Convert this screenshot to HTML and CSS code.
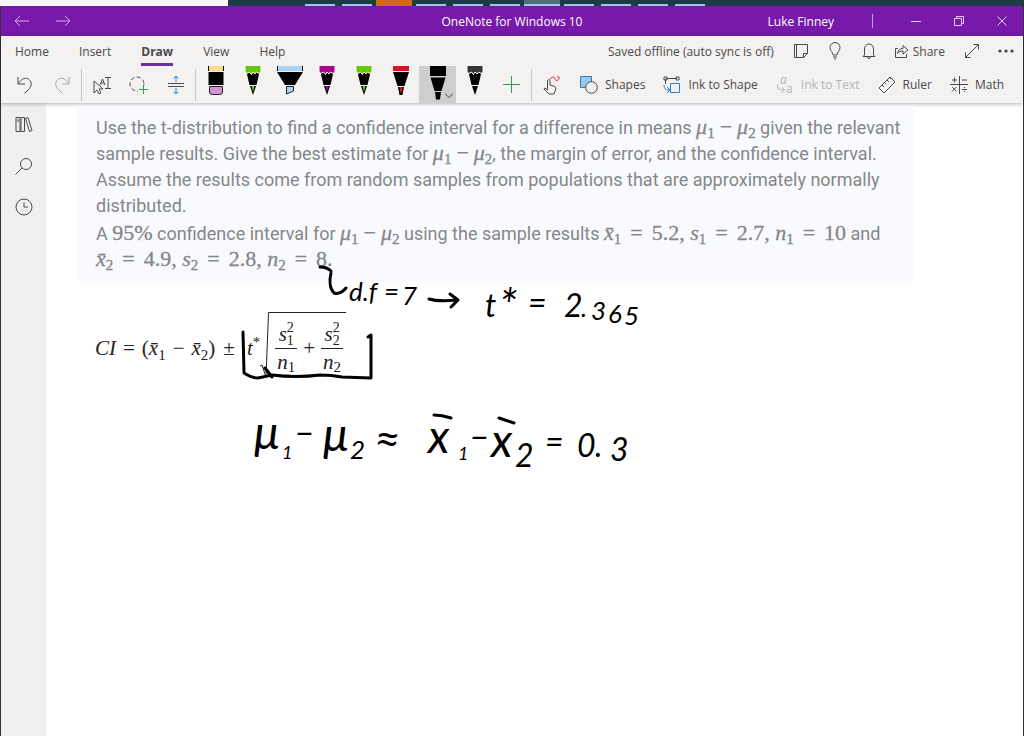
FILE: index.html
```html
<!DOCTYPE html>
<html lang="en">
<head>
  <meta charset="UTF-8">
  <meta name="viewport" content="width=device-width, initial-scale=1.0">
  <title>OneNote for Windows 10</title>
  <link rel="stylesheet" href="styles.css">
</head>
<body>

  <!-- Taskbar peeking out above the window -->
  <div class="taskbar">
    <div class="task-blank"></div>
    <div class="tasks">
      <span></span><span></span><span class="orange"></span><span></span><span></span><span></span><span class="current"></span><span></span><span></span><span></span><span></span>
    </div>
  </div>

  <div class="window">
    <!-- Title bar -->
    <header class="titlebar">
      <div class="history">
        <button aria-label="Back"><svg width="16" height="12" viewBox="0 0 16 12"><path d="M15 6H1M6 1L1 6l5 5"/></svg></button>
        <button aria-label="Forward"><svg width="16" height="12" viewBox="0 0 16 12"><path d="M1 6h14M10 1l5 5-5 5"/></svg></button>
      </div>
      <div class="title">OneNote for Windows 10</div>
      <div class="account">
        <span class="user">Luke Finney</span>
        <span class="divider"></span>
        <button aria-label="Minimize"><svg width="10" height="10" viewBox="0 0 10 10"><path d="M0 5.5h10"/></svg></button>
        <button aria-label="Restore"><svg width="10" height="10" viewBox="0 0 10 10"><path d="M.5 2.5h7v7h-7zM2.5 2.500V.5h7v7h-2"/></svg></button>
        <button aria-label="Close"><svg width="10" height="10" viewBox="0 0 10 10"><path d="M.5.5l9 9M9.500.5l-9 9"/></svg></button>
      </div>
    </header>

    <!-- Ribbon -->
    <div class="ribbon">
      <div class="menu">
        <nav class="tabs">
          <a href="#">Home</a>
          <a href="#">Insert</a>
          <a href="#" class="active">Draw</a>
          <a href="#">View</a>
          <a href="#">Help</a>
        </nav>
        <div class="status">
          <span class="saved">Saved offline (auto sync is off)</span>
          <button aria-label="Feed"><svg width="16" height="16" viewBox="0 0 16 16"><path d="M1.500 1.500h13v9l-4 4h-9zM3.500 1.500v13M14.500 10.500h-4v4"/></svg></button>
          <button aria-label="Tips"><svg width="16" height="18" viewBox="0 0 16 18"><path d="M6 13c0-3-3-4-3-7.500a5 5 0 0 1 10 0C13 9 10 10 10 13zM6 15h4M7 17h2"/></svg></button>
          <button aria-label="Notifications"><svg width="16" height="18" viewBox="0 0 16 18"><path d="M3.500 13V7a4.500 5 0 0 1 9 0v6l1.500 1.500H2zM6.500 15a1.500 1.500 0 0 0 3 0"/></svg></button>
          <button class="share"><svg width="15" height="16" viewBox="0 0 15 16"><path d="M4 5.500H1.500v9h11V11M3.500 10.500C4 7 6 5.500 9 5.500v-3l5 4.500-5 4v-3c-2.500 0-4 .5-5.500 2.500z"/></svg>Share</button>
          <button aria-label="Full screen"><svg width="16" height="16" viewBox="0 0 16 16"><path d="M1.500 14.500l13-13M9.500 1.500h5v5M1.500 9.500v5h5"/></svg></button>
          <button aria-label="More"><svg class="solid" width="16" height="4" viewBox="0 0 16 4"><circle cx="2" cy="2" r="1.600"/><circle cx="8" cy="2" r="1.600"/><circle cx="14" cy="2" r="1.600"/></svg></button>
        </div>
      </div>

      <div class="tools">
        <button aria-label="Undo"><svg width="18" height="20" viewBox="0 0 18 20"><path d="M2 2v7h7M2.500 8.500C6 3 10 2 13 4.500c4 3.500 2 7.500-.5 10L8.500 18.500"/></svg></button>
        <button aria-label="Redo" class="dim"><svg width="18" height="20" viewBox="0 0 18 20"><path d="M16 2v7H9M15.500 8.500C12 3 8 2 5 4.500c-4 3.500-2 7.500.5 10l4 4"/></svg></button>
        <span class="rule"></span>
        <button aria-label="Select objects or type text"><svg width="20" height="20" viewBox="0 0 20 20"><path d="M2 6v12l3-3 2 4 2-1-2-4h4zM8 10l2.500-6 2.500 6M9 8h3M13 2.500h6M16 2.500v11M13 13.500h6"/></svg></button>
        <button aria-label="Lasso select"><svg width="20" height="20" viewBox="0 0 20 20"><circle cx="8" cy="9" r="7" stroke-dasharray="4 2.500"/><path class="white" d="M9 10h11v10H9z"/><path class="green" d="M14.500 10v9M10 14.500h9"/></svg></button>
        <button aria-label="Insert space"><svg width="18" height="20" viewBox="0 0 18 20"><path d="M1 8.500h16M1 11.500h16"/><path class="blue" d="M9 7V1M6.500 3.500L9 1l2.500 2.500M9 13v6M6.500 16.500L9 19l2.500-2.500"/></svg></button>
        <span class="rule"></span>
        <button class="pen" aria-label="Eraser"><svg width="18" height="34" viewBox="0 0 18 34"><path fill="#f8dc8c" d="M2 0h14v5H2z"/><path fill="#000" d="M1 0h1v5H1zM16 0h1v5h-1zM1.500 6h15v13h-15z"/><path fill="#d890d4" stroke="#222" d="M2.500 20.500h13V26q0 2.500-3 2.500h-7q-3 0-3-2.500z"/></svg></button>
        <button class="pen" aria-label="Green pencil"><svg width="18" height="34" viewBox="0 0 18 34"><path fill="#000" d="M2 4h14l-3.500 15h-7zM6 20h6L9 29z"/><path fill="#66c800" stroke="#fff" d="M1-1h16v7l-2 1.500-2.500-1.500L11 8 9 6 7.500 8.500 5.500 6 3 7.500 1 6z"/><path fill="#66c800" d="M7.500 20h3L9 26z"/></svg></button>
        <button class="pen" aria-label="Blue highlighter"><svg width="28" height="34" viewBox="0 0 28 34"><path fill="#a8d4f8" d="M1.500 0h25v5h-25z"/><path fill="#000" d="M1 0h1v5H1zM26 0h1v5h-1zM1 6h26l-8 13H9z"/><path fill="#a8d4f8" stroke="#222" d="M10.500 20.500h7V25l-7 3z"/></svg></button>
        <button class="pen" aria-label="Magenta pencil"><svg width="18" height="34" viewBox="0 0 18 34"><path fill="#000" d="M2 4h14l-3.500 15h-7zM6 20h6L9 29z"/><path fill="#ad0090" stroke="#fff" d="M1-1h16v7l-2 1.500-2.500-1.500L11 8 9 6 7.500 8.500 5.500 6 3 7.500 1 6z"/><path fill="#ad0090" d="M7.500 20h3L9 26z"/></svg></button>
        <button class="pen" aria-label="Green pencil 2"><svg width="18" height="34" viewBox="0 0 18 34"><path fill="#000" d="M2 4h14l-3.500 15h-7zM6 20h6L9 29z"/><path fill="#66c800" stroke="#fff" d="M1-1h16v7l-2 1.500-2.500-1.500L11 8 9 6 7.500 8.500 5.500 6 3 7.500 1 6z"/><path fill="#66c800" d="M7.500 20h3L9 26z"/></svg></button>
        <button class="pen" aria-label="Red pen"><svg width="18" height="34" viewBox="0 0 18 34"><path fill="#df1028" d="M1 0h16v5H1z"/><path fill="#000" d="M1 6h16l-4.500 14h-7zM6 21h6l-1.500 8h-3z"/><path fill="#df1028" d="M7.500 21h3L9.500 27h-1z"/></svg></button>
        <button class="pen selected" aria-label="Black pen"><svg width="18" height="34" viewBox="0 0 18 34"><path fill="#000" d="M1 0h16v10H1zM1.500 11.500h15L12.500 25h-7zM6 26h6l-1 7.500H7z"/></svg><svg class="chevron" width="8" height="5" viewBox="0 0 8 5"><path d="M0 .5l4 4 4-4"/></svg></button>
        <button class="pen" aria-label="Black pencil"><svg width="18" height="34" viewBox="0 0 18 34"><path fill="#000" d="M2 4h14l-3.500 15h-7zM6 20h6L9 29z"/><path fill="#333" stroke="#fff" d="M1-1h16v7l-2 1.500-2.500-1.500L11 8 9 6 7.500 8.500 5.500 6 3 7.500 1 6z"/></svg></button>
        <button aria-label="Add pen"><svg width="17" height="17" viewBox="0 0 17 17"><path class="green" d="M8.500 0v17M0 8.500h17"/></svg></button>
        <span class="rule"></span>
        <button aria-label="Draw with touch"><svg width="20" height="20" viewBox="0 0 20 20"><path d="M5.500 12V5.500q1.500-2 2.500 0V10l5 1.500q1.500 1 .5 3.500l-1.500 4h-5L2 14q0-2 3.500 1z"/><path class="red" d="M8 4c3-3 5-2 5 0s3 2 4 0-1-3-2-2"/></svg></button>
        <div class="labelled">
          <button><svg width="18" height="18" viewBox="0 0 18 18"><path fill="#9cc9ee" stroke="#2b7cc0" d="M.5.5h11v11H.5z"/><circle fill="#f3f2f1" cx="11.500" cy="11.500" r="5.800"/></svg>Shapes</button>
          <button><svg width="18" height="18" viewBox="0 0 18 18"><path d="M3 2.500h11M2.500 3v5M1 1h3v3H1zM13 1h3v3h-3z"/><path class="blue" d="M7.500 7.500h9v9h-9zM1 9c0 4 2 5 5 5M4 11l3 3-3 3"/></svg>Ink to Shape</button>
          <button disabled><svg width="18" height="28" viewBox="0 0 18 28"><path d="M1.500 13v2q0 4 4 4H8M5.500 16l3 3-3 3"/><text x="4" y="13" class="ital">a</text><text x="10" y="22">a</text></svg>Ink to Text</button>
          <button><svg width="18" height="18" viewBox="0 0 18 18"><path d="M12 1l5 5L6 17l-5-5zM4 9l2 2M6.500 6.500l1.500 1.500M9 4l2 2M11.500 1.500L13 3"/></svg>Ruler</button>
          <button><svg width="18" height="18" viewBox="0 0 18 18"><path d="M9.500 0v18M0 8.500h18M2 4h5M4.500 1.500v5M12 4h5M2 11l4.500 4.500M6.500 11L2 15.500M12 13.500h5M14.500 11v1M14.500 15v1"/></svg>Math</button>
        </div>
      </div>
    </div>

    <div class="workspace">
      <nav class="sidebar">
        <button aria-label="Notebooks"><svg width="18" height="18" viewBox="0 0 18 18"><path d="M1 1.500h4v14H1zM6 1.500h3.500v14H6zM10.500 2.500L13 1.500l4 13-2.500 1zM3 3v3"/></svg></button>
        <button aria-label="Search"><svg width="18" height="18" viewBox="0 0 18 18"><circle cx="11" cy="7" r="5.500"/><path d="M7 11l-6.500 6.500"/></svg></button>
        <button aria-label="Recent notes"><svg width="18" height="18" viewBox="0 0 18 18"><circle cx="9" cy="9" r="8"/><path d="M9 4.500V9h4"/></svg></button>
      </nav>

      <main class="page">
        <section class="question">
          <p>Use the t-distribution to find a confidence interval for a difference in means <span class="tex"><i>μ</i><sub>1</sub><b>−</b><i>μ</i><sub>2</sub></span> given the relevant<br>
          sample results. Give the best estimate for <span class="tex"><i>μ</i><sub>1</sub><b>−</b><i>μ</i><sub>2</sub></span>, the margin of error, and the confidence interval.<br>
          Assume the results come from random samples from populations that are approximately normally<br>
          distributed.</p>
          <p>A <span class="tex">95%</span> confidence interval for <span class="tex"><i>μ</i><sub>1</sub><b>−</b><i>μ</i><sub>2</sub></span> using the sample results <span class="tex"><i>x̄</i><sub>1</sub><b class="eq">=</b>5.2, <i>s</i><sub>1</sub><b class="eq">=</b>2.7, <i>n</i><sub>1</sub><b class="eq">=</b>10</span> and<br>
          <span class="tex"><i>x̄</i><sub>2</sub><b class="eq">=</b>4.9, <i>s</i><sub>2</sub><b class="eq">=</b>2.8, <i>n</i><sub>2</sub><b class="eq">=</b>8.</span></p>
        </section>

        <div class="formula">
          <div class="terms"><i>CI</i><b>=</b>(<i>x̄</i><sub>1</sub><b>−</b><i>x̄</i><sub>2</sub>)<b class="pm">±</b><i>t</i><sup>*</sup></div>
          <svg class="root" width="10" height="66" viewBox="0 0 10 66"><path d="M0 54l2-1 4 12L8.500.5H10"/></svg>
          <div class="radicand">
            <div class="fraction"><div><i>s</i><span class="scripts"><small>2</small><small>1</small></span></div><div><i>n</i><sub>1</sub></div></div>
            <span class="plus">+</span>
            <div class="fraction"><div><i>s</i><span class="scripts"><small>2</small><small>2</small></span></div><div><i>n</i><sub>2</sub></div></div>
          </div>
        </div>

        <!-- Pen notes -->
        <svg class="ink" width="978" height="400" viewBox="46 103 978 400">
          <path d="M320 267q7 0 11 4M331 273c-2 8-1 16 3 20q6 2 12-5"/>
          <path d="M429 299q10 3 28 1M450 294l8 6-7 7"/>
          <path d="M243 332l1 41q8 5 14 5l14-3q24 3 48 0 12 0 22 2l29 1V335l-3 2M265 368l7 9"/>
          <path d="M434 415q8 0 17 3M499 418l15 5"/>
          <text x="349" y="301" class="note">d.f</text>
          <text x="384" y="301" class="note">=</text>
          <text x="402" y="305" class="note">7</text>
          <text x="485" y="317" class="big">t</text>
          <text x="499" y="322" class="mean">*</text>
          <text x="528" y="314" class="big">=</text>
          <text x="564" y="317" class="big">2</text>
          <text x="581" y="317" class="note">.</text>
          <text x="591" y="320" class="note">3</text>
          <text x="608" y="323" class="note">6</text>
          <text x="624" y="325" class="note">5</text>
          <text x="254" y="449" class="mean">μ</text>
          <text x="282" y="459" class="index">1</text>
          <text x="295" y="445" class="big">−</text>
          <text x="323" y="451" class="mean">μ</text>
          <text x="350" y="459" class="note">2</text>
          <text x="374" y="455" class="mean">≈</text>
          <text x="428" y="453" class="mean">x</text>
          <text x="458" y="460" class="index">1</text>
          <text x="470" y="449" class="big">−</text>
          <text x="491" y="457" class="mean">x</text>
          <text x="515" y="467" class="big">2</text>
          <text x="545" y="453" class="big">=</text>
          <text x="577" y="457" class="big">0</text>
          <text x="595" y="457" class="big">.</text>
          <text x="610" y="461" class="big">3</text>
        </svg>
      </main>
    </div>
  </div>

</body>
</html>
```
FILE: styles.css
```css
* {
  box-sizing: border-box;
}

body {
  margin: 0;
  min-height: 100vh;
  display: flex;
  flex-direction: column;
  font-family: "Open Sans", "Noto Sans", sans-serif;
  font-size: 12px;
  color: #4a4a4a;
  background: #fff;
}

button {
  display: flex;
  align-items: center;
  justify-content: center;
  padding: 0;
  border: none;
  background: none;
  color: inherit;
  font: inherit;
  white-space: nowrap;
}

svg {
  flex: none;
  fill: none;
  stroke: currentColor;
}

.green { stroke: #2f9a55; }
.blue { stroke: #2585c4; }
.red { stroke: #d8303c; }
.white { fill: #f3f2f1; stroke: none; }
.solid { fill: #444; stroke: none; }

/* Taskbar strip */
.taskbar {
  display: flex;
  height: 6px;
  background: #1e3a44;
}

.task-blank {
  width: 228px;
  background: #f7f7f7;
}

.tasks {
  display: flex;
  gap: 7px;
  padding-left: 77px;
}

.tasks span {
  width: 30px;
  border-bottom: 2px solid #9cc9e8;
}

.tasks .orange {
  width: 36px;
  margin: 0 -3px;
  background: #d2691e;
  border: none;
}

.tasks .current {
  width: 36px;
  margin: 0 -3px;
  background: #566d76;
}

.window {
  flex: 1;
  display: flex;
  flex-direction: column;
  border-left: 1px solid #333;
  border-right: 1px solid #333;
}

/* Title bar */
.titlebar {
  display: grid;
  grid-template-columns: 1fr auto 1fr;
  align-items: center;
  height: 30px;
  background: #7719aa;
  color: #fff;
}

.history,
.account {
  display: flex;
  align-items: center;
}

.history button {
  width: 41px;
  height: 30px;
  color: #d9a8ee;
}

.account {
  justify-content: flex-end;
}

.account button {
  width: 43px;
  height: 30px;
  color: #e6cdf2;
}

.divider {
  width: 1px;
  height: 14px;
  margin: 0 21px 0 38px;
  background: #c79be0;
}

/* Ribbon */
.ribbon {
  position: relative;
  background: #f3f2f1;
  box-shadow: 0 1px 4px rgba(0, 0, 0, 0.3);
}

.menu,
.tabs,
.status,
.tools,
.labelled {
  display: flex;
  align-items: center;
}

.menu {
  justify-content: space-between;
  height: 30px;
  padding-left: 14px;
}

.tabs {
  gap: 30px;
}

.tabs a {
  height: 30px;
  line-height: 31px;
  color: inherit;
  text-decoration: none;
}

.tabs .active {
  font-weight: bold;
  border-bottom: 3px solid #6b2fa0;
}

.status button {
  width: 34px;
}

.saved {
  margin-right: 10px;
}

.status .share {
  width: auto;
  gap: 4px;
  margin: 0 10px 0 8px;
}

.tools {
  height: 37px;
  padding-left: 5px;
}

.tools > button {
  width: 37px;
  height: 37px;
}

.rule {
  width: 1px;
  height: 32px;
  margin: 0 1px;
  background: #c8c8c8;
}

.tools > .dim {
  color: #aaa;
}

.pen {
  position: relative;
  align-items: flex-start;
}

.pen svg {
  stroke: none;
}

.selected {
  background: #cfcecd;
}

.pen .chevron {
  position: absolute;
  right: 3px;
  bottom: 5px;
  stroke: #444;
}

.labelled {
  gap: 18px;
  margin-left: 10px;
}

.labelled button {
  gap: 7px;
}

.labelled button:disabled {
  color: #b5b5b5;
}

.labelled text {
  fill: currentColor;
  stroke: none;
  font-size: 12px;
}

.labelled .ital {
  font-style: italic;
}

/* Notebook area */
.workspace {
  flex: 1;
  display: flex;
}

.sidebar {
  width: 45px;
  padding-top: 1px;
  background: #f1f0ef;
}

.sidebar button {
  width: 45px;
  height: 41px;
}

.page {
  position: relative;
  flex: 1;
  padding: 3px 30px 0;
}

.question {
  max-width: 838px;
  padding: 9px 0 6px 20px;
  background: #f8fafe;
  color: #85878a;
  font-family: Roboto, sans-serif;
  font-size: 18px;
  line-height: 26px;
  white-space: nowrap;
}

.question p {
  margin: 0 0 2px;
}

.tex {
  font-family: "Liberation Serif", serif;
  font-size: 22px;
  line-height: 20px;
  -webkit-text-stroke: 0.3px;
}

.tex b {
  margin: 0 5px;
  font-weight: normal;
}

.tex .eq {
  margin: 0 9px;
}

sub,
sup {
  font-size: 15px;
  line-height: 0;
}

.tex sub {
  vertical-align: -4px;
}

/* Typed equation */
.formula {
  display: flex;
  align-items: center;
  height: 66px;
  margin: 31px 0 0 19px;
  color: #222;
  font-family: "Liberation Serif", serif;
  font-size: 21px;
}

.terms {
  padding-top: 6px;
}

.terms b {
  margin: 0 7px;
  font-weight: normal;
}

.terms .pm {
  margin: 0 12px 0 8px;
}

.radicand {
  display: flex;
  align-items: center;
  gap: 6px;
  height: 66px;
  padding: 6px 3px 0 5px;
  border-top: 1px solid #222;
}

.fraction {
  min-width: 22px;
  text-align: center;
}

.fraction > div {
  display: flex;
  align-items: center;
  justify-content: center;
  height: 28px;
}

.fraction > div:first-child {
  border-bottom: 1px solid #222;
}

.fraction sub {
  align-self: flex-end;
  line-height: 20px;
}

.scripts {
  display: grid;
}

.scripts small {
  font-size: 14px;
  line-height: 13px;
}

/* Handwriting layer */
.ink {
  position: absolute;
  top: 0;
  left: 0;
  stroke: #000;
  stroke-width: 3;
  stroke-linecap: round;
  stroke-linejoin: round;
}

.ink text {
  fill: #000;
  stroke: none;
  font-family: Lato, sans-serif;
  font-style: italic;
}

.ink .note {
  font-size: 26px;
}

.ink .big {
  font-size: 32px;
}

.ink .mean {
  font-size: 46px;
}

.ink .index {
  font-size: 18px;
}
```
